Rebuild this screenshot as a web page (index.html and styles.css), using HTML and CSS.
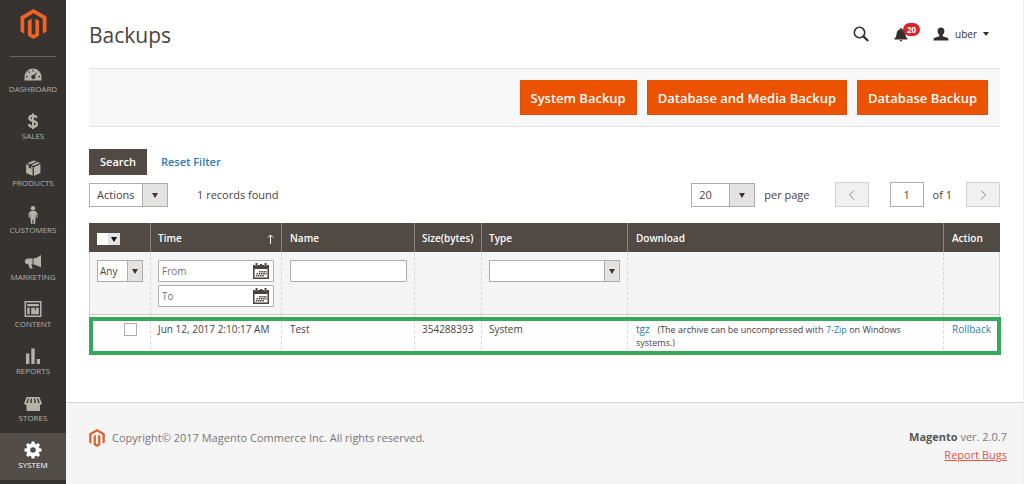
FILE: index.html
```html
<!DOCTYPE html>
<html lang="en">
<head>
    <meta charset="UTF-8">
    <meta name="viewport" content="width=device-width, initial-scale=1.0">
    <title>Backups / Magento Admin</title>
    <link rel="stylesheet" href="styles.css">
</head>
<body>
    <svg class="defs" aria-hidden="true">
        <symbol id="magento" viewBox="1.6 0 20.8 24">
            <path d="M12 24l-4.455-2.572v-12l2.97-1.715v12.001l1.485.902 1.485-.902V7.713l2.971 1.715v12L12 24zM22.391 6v12l-2.969 1.714V7.713L12 3.43 4.574 7.713v12.001L1.609 18V6L12 0l10.391 6z"/>
        </symbol>
        <symbol id="calendar" viewBox="0 0 16 16">
            <path fill-rule="evenodd" d="M0 2h2v1h3V2h6v1h3V2h2v14H0zM1.500 6v8.500h13V6z"/>
            <path d="M2.500 0h2v3h-2zM11.500 0h2v3h-2zM7 1h2v2H7z"/>
            <path d="M6 8h1.500v1.500H6zM8.200 8h1.500v1.500H8.200zM10.400 8h1.500v1.500h-1.500zM12.400 8h1.200v1.500h-1.200zM3.600 10h1.500v1.500H3.600zM5.800 10h1.500v1.500H5.800zM8 10h1.500v1.500H8zM10.200 10h1.500v1.500h-1.500zM12.300 10h1.300v1.500h-1.300zM2.800 12h1.500v1.500H2.800zM5 12h1.500v1.500H5zM7.200 12h1.500v1.500H7.200zM9.400 12h1.500v1.500H9.400z"/>
        </symbol>
    </svg>

    <nav class="menu">
        <a class="logo" href="#" aria-label="Magento"><svg><use href="#magento"/></svg></a>
        <ul>
            <li><a href="#">
                <svg viewBox="0 0 18 18"><path fill-rule="evenodd" d="M.500 15.500V12a8.500 8.500 0 0 1 17 0v3.500zM8.400 4.800h1.200v1.700H8.400zM4 7l.9-.9 1.100 1.200-.8.800zM2 11h1.800v1.200H2zM14.200 11H16v1.200h-1.800zM13 6.800l-3.300 3.400a2 2 0 1 0 1.400 1.200z"/></svg>
                Dashboard
            </a></li>
            <li><a href="#">
                <svg viewBox="0 0 18 18"><path class="line" stroke-width="2.400" d="M12.800 5.900C12.200 4.500 11 3.700 9 3.700c-2.200 0-3.600 1-3.600 2.600C5.400 10 12.900 8 12.900 12c0 1.800-1.600 2.800-3.900 2.800-2.300 0-3.700-1-4.200-2.700"/><path d="M8 1.500h2V17H8z"/></svg>
                Sales
            </a></li>
            <li><a href="#">
                <svg viewBox="0 0 18 18"><path d="M9.800 1.600l2.600 1-6.600 2.700L3.200 4.200zM13.600 3.100l2.600 1L9.300 6.800 7.100 5.900zM2.100 5.200l2.600 1v3l1.400-.6 1.200 1.900V7.300l1.300.5v9L2.100 13.900zM9.900 7.900l6.500-2.600v8.800l-6.500 2.800z"/></svg>
                Products
            </a></li>
            <li><a href="#">
                <svg viewBox="0 0 18 18"><circle cx="9" cy="2.300" r="2.300"/><path d="M6.500 5h5l2 2.500v4h-1.200v-3h-.6v3.300L11 18H9.500v-4.500h-1V18H7l-.7-6.200V8.500h-.6v3H4.500v-4z"/></svg>
                Customers
            </a></li>
            <li><a href="#">
                <svg viewBox="0 0 18 18"><path d="M17 2v12.500c-2.500-1.500-4.500-2.600-7.500-3.100V5.500C12.500 5 14.500 3.700 17 2zM8.600 5.600v5.800H7.300l1.400 4H5.800l-1.500-4.200C2.200 11.200.8 10.300.8 8.500s1.400-2.800 3.500-2.900z"/></svg>
                Marketing
            </a></li>
            <li><a href="#">
                <svg viewBox="0 0 18 18"><path fill-rule="evenodd" d="M.5 1h17v16H.5zM2 2.500v13h14v-13zM3.200 4h11.600v2.300H3.200zM3.200 7.800h2.500v6.500H3.200zM7.200 7.800h7.600v6.500H7.200zM10.800 7.800v2.700h1V7.800z"/></svg>
                Content
            </a></li>
            <li><a href="#">
                <svg viewBox="0 0 18 18"><path d="M2 6.500h3.300V17H2zM7.300 1.500h3.400V17H7.300zM12.700 12H16v5h-3.300z"/></svg>
                Reports
            </a></li>
            <li><a href="#">
                <svg viewBox="0 0 18 18"><path fill-rule="evenodd" d="M2.500 3h13l2.300 6.200c0 1-.7 1.600-1.800 1.700V17H2.500v-6.100C1.200 10.900.2 10.200.2 9.200zM4 4.500L2.400 9h1.400l1.300-4.500zM6.900 4.500L6.200 9h1.500l.4-4.500zM10 4.500l.4 4.500h1.500l-.7-4.500zM13 4.500L14.300 9h1.400l-1.500-4.500z"/></svg>
                Stores
            </a></li>
            <li class="active"><a href="#">
                <svg viewBox="0 0 18 18"><path fill-rule="evenodd" d="M7.600.5h2.800l.4 2.200 1.300.5L14 2l2 2-1.200 1.900.5 1.300 2.200.4v2.800l-2.200.4-.5 1.300L16 14l-2 2-1.900-1.200-1.300.5-.4 2.200H7.600l-.4-2.200-1.300-.5L4 16l-2-2 1.200-1.900-.5-1.300-2.200-.4V7.600l2.200-.4.5-1.300L2 4l2-2 1.900 1.200 1.300-.5zM9 6.200a2.800 2.800 0 1 0 0 5.600 2.800 2.800 0 0 0 0-5.600z"/></svg>
                System
            </a></li>
        </ul>
    </nav>

    <div class="page">
        <header class="header">
            <h1>Backups</h1>
            <div class="tools">
                <button class="icon-btn" aria-label="Search">
                    <svg viewBox="0 0 16 16"><circle class="line" cx="6.500" cy="6.500" r="5.200" stroke-width="1.600"/><path class="line" stroke-width="2.200" d="M10.400 10.400l4.800 4.600"/></svg>
                </button>
                <button class="icon-btn bell" aria-label="Notifications">
                    <svg viewBox="0 0 16 16"><path d="M7.300 2h1.400v1.300c2.400.4 3.600 2.300 3.800 4.900.1 2 .7 3.300 2 4.300v1h-13v-1c1.300-1 1.900-2.300 2-4.300.2-2.600 1.400-4.500 3.800-4.900zM6.500 14h3L8 15.700z"/></svg>
                    <span class="badge">20</span>
                </button>
                <button class="user">
                    <svg viewBox="0 0 16 16"><path d="M8 1.500c2.200 0 3.400 1.400 3.400 3.500 0 1.700-.7 3-1.700 3.800v1.400l4.600 1.500c.8.300 1.200 1 1.200 2.800H.5c0-1.800.4-2.500 1.200-2.800l4.600-1.500V8.800C5.300 8 4.600 6.700 4.600 5c0-2.100 1.200-3.500 3.400-3.500z"/></svg>
                    uber
                </button>
            </div>
        </header>

        <main>
            <div class="actions-bar">
                <button class="primary">System Backup</button>
                <button class="primary">Database and Media Backup</button>
                <button class="primary">Database Backup</button>
            </div>

            <div class="filter-actions">
                <button class="search">Search</button>
                <a href="#">Reset Filter</a>
            </div>

            <div class="toolbar">
                <div class="select massaction">
                    <select aria-label="Actions"><option>Actions</option><option>Delete</option></select>
                </div>
                <span class="records">1 records found</span>
                <div class="pager">
                    <div class="select limit">
                        <select id="limit"><option>20</option><option>30</option><option>50</option></select>
                    </div>
                    <label for="limit">per page</label>
                    <button class="page-btn prev" aria-label="Previous page" disabled>
                        <svg viewBox="0 0 12 12"><path class="line" d="M8 1.500L3.500 6 8 10.500"/></svg>
                    </button>
                    <input id="page" class="page-input" type="text" value="1">
                    <label for="page">of 1</label>
                    <button class="page-btn next" aria-label="Next page" disabled>
                        <svg viewBox="0 0 12 12"><path class="line" d="M4 1.500L8.500 6 4 10.500"/></svg>
                    </button>
                </div>
            </div>

            <table class="grid">
                <colgroup>
                    <col class="col-check">
                    <col class="col-time">
                    <col class="col-name">
                    <col class="col-size">
                    <col class="col-type">
                    <col>
                    <col class="col-action">
                </colgroup>
                <thead>
                    <tr>
                        <th><div class="select mini"><select aria-label="Select rows"><option></option><option>Select All</option></select></div></th>
                        <th><div class="sorted">Time <svg viewBox="0 0 7 10"><path class="line" d="M3.500 10V1M1 3.500L3.500 1 6 3.500"/></svg></div></th>
                        <th>Name</th>
                        <th>Size(bytes)</th>
                        <th>Type</th>
                        <th>Download</th>
                        <th>Action</th>
                    </tr>
                </thead>
                <tbody>
                    <tr class="filters">
                        <td><div class="select small"><select aria-label="Selected"><option>Any</option><option>Yes</option><option>No</option></select></div></td>
                        <td>
                            <div class="date"><input type="text" placeholder="From" aria-label="From"><svg><use href="#calendar"/></svg></div>
                            <div class="date"><input type="text" placeholder="To" aria-label="To"><svg><use href="#calendar"/></svg></div>
                        </td>
                        <td><input type="text" aria-label="Name"></td>
                        <td></td>
                        <td><div class="select small"><select aria-label="Type"><option></option><option>System</option><option>Database</option></select></div></td>
                        <td></td>
                        <td></td>
                    </tr>
                    <tr class="highlight">
                        <td class="check"><input type="checkbox" aria-label="Select backup Test"></td>
                        <td>Jun 12, 2017 2:10:17 AM</td>
                        <td>Test</td>
                        <td>354288393</td>
                        <td>System</td>
                        <td><a href="#">tgz</a> &nbsp; <small>(The archive can be uncompressed with <a href="#">7-Zip</a> on Windows systems.)</small></td>
                        <td><a href="#">Rollback</a></td>
                    </tr>
                </tbody>
            </table>
        </main>

        <footer class="footer">
            <p class="copyright"><svg><use href="#magento"/></svg> Copyright© 2017 Magento Commerce Inc. All rights reserved.</p>
            <div class="version">
                <p><strong>Magento</strong> ver. 2.0.7</p>
                <a href="#">Report Bugs</a>
            </div>
        </footer>
    </div>
</body>
</html>
```

FILE: styles.css
```css
*, *::before, *::after {
    box-sizing: border-box;
}
body {
    margin: 0;
    display: flex;
    min-height: 100vh;
    font-family: "Open Sans", sans-serif;
    font-size: 11px;
    line-height: 16px;
    color: #4a423d;
    background: #fff;
}
h1, p, ul {
    margin: 0;
    padding: 0;
}
a {
    color: #2a7cb5;
    text-decoration: none;
}
button, input, select {
    font: inherit;
    color: inherit;
    margin: 0;
    border-radius: 0;
}
button {
    border: none;
    padding: 0;
    background: none;
    cursor: pointer;
}
svg {
    display: block;
    fill: currentColor;
}
.line {
    fill: none;
    stroke: currentColor;
}
.defs {
    display: none;
}

/* side menu */
.menu {
    flex: 0 0 66px;
    background: #373330;
    overflow: hidden;
}
.logo {
    display: flex;
    justify-content: center;
    height: 57px;
    margin: 0 10px;
    padding-top: 9px;
    color: #f26322;
    border-bottom: 1px solid #6b655f;
}
.logo svg {
    width: 27px;
    height: 30px;
}
.menu ul {
    list-style: none;
}
.menu li a {
    display: flex;
    flex-direction: column;
    align-items: center;
    height: 47px;
    padding-top: 8px;
    font-size: 8px;
    line-height: 12px;
    text-transform: uppercase;
    color: #b5b1ab;
}
.menu li svg {
    width: 18px;
    height: 18px;
}
.menu .active a {
    background: #524d49;
    color: #fff;
}

/* page */
.page {
    flex: 1;
    min-width: 0;
    display: flex;
    flex-direction: column;
    border-right: 1px solid #eee;
}
.header {
    display: flex;
    align-items: center;
    justify-content: space-between;
    height: 68px;
    padding: 0 34px 0 23px;
}
h1 {
    padding-top: 2px;
    font-size: 21px;
    line-height: 30px;
    font-weight: 400;
}
.tools {
    display: flex;
    align-items: center;
    gap: 24px;
    color: #33302d;
}
.icon-btn svg, .user svg {
    width: 16px;
    height: 16px;
}
.bell {
    position: relative;
}
.badge {
    position: absolute;
    top: -3px;
    left: 10px;
    padding: 0 4px;
    border-radius: 7px;
    background: #d8232a;
    color: #fff;
    font-size: 8px;
    line-height: 13px;
    font-weight: 700;
}
.user {
    display: flex;
    align-items: center;
    gap: 6px;
    font-size: 10px;
}
.user::after {
    content: "";
    border: 3px solid transparent;
    border-top: 4px solid #33302d;
    border-bottom: none;
}
main {
    padding: 0 23px 47px;
}
.actions-bar {
    display: flex;
    justify-content: flex-end;
    gap: 10px;
    padding: 11px 12px;
    background: #f8f8f8;
    border-top: 1px solid #e3e3e3;
    border-bottom: 1px solid #e3e3e3;
}
.primary {
    height: 35px;
    padding: 0 10px;
    border: 1px solid #e04e04;
    background: #eb5202;
    color: #fff;
    font-size: 13px;
    font-weight: 600;
}
.filter-actions {
    display: flex;
    align-items: center;
    gap: 14px;
    margin: 22px 0 7px;
    font-weight: 600;
}
.search {
    height: 26px;
    padding: 0 11px;
    background: #514943;
    color: #fff;
}
.toolbar {
    display: flex;
    align-items: center;
    margin-bottom: 16px;
}
.records {
    margin-left: 29px;
}
.pager {
    display: flex;
    align-items: center;
    margin-left: auto;
}
.pager label {
    margin-left: 9px;
}

/* drop-downs */
.select {
    position: relative;
    height: 24px;
}
.select select {
    appearance: none;
    display: block;
    width: 100%;
    height: 100%;
    padding: 0 7px;
    border: 1px solid #adadad;
    background: #fff;
}
.select::before {
    content: "";
    position: absolute;
    top: 0;
    right: 0;
    width: 26px;
    height: 100%;
    border: 1px solid #adadad;
    background: #e3e3e3;
    pointer-events: none;
}
.select::after {
    content: "";
    position: absolute;
    top: 10px;
    right: 10px;
    border: 3px solid transparent;
    border-top: 5px solid #41362f;
    border-bottom: none;
    pointer-events: none;
}
.massaction {
    width: 79px;
}
.limit {
    width: 64px;
}
.small {
    height: 22px;
}
.small select {
    padding: 0 2px;
}
.small::before {
    width: 16px;
}
.small::after {
    top: 9px;
    right: 5px;
}
.mini {
    width: 23px;
    height: 12px;
}
.mini select {
    border-color: #fff;
}
.mini::before {
    width: 12px;
    border-color: #e3e3e3;
}
.mini::after {
    top: 4px;
    right: 3px;
    border-top-color: #000;
}

.page-btn {
    display: flex;
    align-items: center;
    justify-content: center;
    width: 34px;
    height: 25px;
    border: 1px solid #d0d0d0;
    background: #f0f0f0;
    color: #888;
}
.page-btn svg {
    width: 12px;
    height: 12px;
}
.prev {
    margin: 0 21px 0 25px;
}
.next {
    margin-left: 14px;
}
.page-input {
    width: 34px;
    height: 25px;
    padding: 0;
    border: 1px solid #adadad;
    text-align: center;
}

/* grid */
.grid {
    width: 100%;
    table-layout: fixed;
    border-spacing: 0;
    font-size: 10px;
    line-height: 13px;
}
.col-check {
    width: 62px;
}
.col-time {
    width: 131px;
}
.col-name {
    width: 133px;
}
.col-size {
    width: 67px;
}
.col-type {
    width: 146px;
}
.col-action {
    width: 56px;
}
.grid th {
    height: 29px;
    padding: 2px 7px 0;
    background: #514943;
    color: #fff;
    font-weight: 600;
    text-align: left;
    border-right: 1px solid #8a837f;
}
.grid th:first-child {
    padding-left: 8px;
}
.grid th:last-child {
    border-right: none;
}
.sorted {
    display: flex;
    align-items: center;
    justify-content: space-between;
}
.sorted svg {
    width: 7px;
    height: 10px;
}
.grid td {
    height: 40px;
    padding: 8px 7px 5px;
    vertical-align: top;
    border-right: 1px dashed #d6d6d6;
}
.grid td:last-child {
    border-right: 1px solid #d6d6d6;
}
.grid td:first-child {
    border-left: 1px solid #d6d6d6;
}
.filters td {
    height: 63px;
    background: #f5f5f5;
    border-bottom: 1px solid #ccc;
}
.grid td:nth-child(3), .grid th:nth-child(3),
.grid td:nth-child(n+6), .grid th:nth-child(n+6) {
    padding-left: 8px;
}
.grid input[type="text"] {
    display: block;
    width: 100%;
    height: 22px;
    padding: 0 3px;
    border: 1px solid #adadad;
    border-radius: 1px;
    background: #fff;
}
.grid ::placeholder {
    color: #757575;
}
.date {
    position: relative;
}
.date + .date {
    margin-top: 3px;
}
.date svg {
    position: absolute;
    top: 3px;
    right: 5px;
    width: 16px;
    height: 16px;
}
.grid .check {
    padding-right: 13px;
}
.check input {
    appearance: none;
    display: block;
    width: 13px;
    height: 13px;
    margin: 0 0 0 auto;
    border: 1px solid #adadad;
    background: #fff;
}
.grid small {
    font-size: 9px;
}
.highlight {
    position: relative;
}
.check::after {
    content: "";
    position: absolute;
    inset: 2px -1px 0 0;
    border: 4px solid #35a85a;
    pointer-events: none;
}

/* footer */
.footer {
    flex: 1;
    display: flex;
    justify-content: space-between;
    align-items: flex-start;
    padding: 26px 16px 20px 23px;
    background: #f5f5f5;
    border-top: 1px solid #d6d6d6;
    color: #777;
}
.copyright {
    display: flex;
    align-items: center;
    gap: 7px;
}
.copyright svg {
    width: 16px;
    height: 18px;
    color: #d9612b;
}
.version {
    text-align: right;
}
.version p {
    margin-bottom: 2px;
}
.version strong {
    color: #555;
}
.version a {
    color: #e0563f;
    text-decoration: underline;
}
```
